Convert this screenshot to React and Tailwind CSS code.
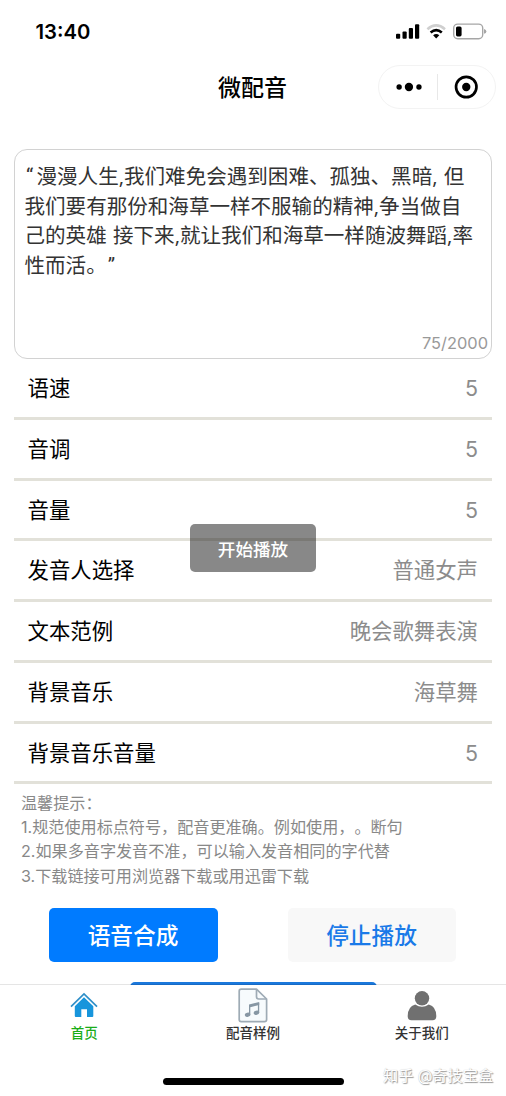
import React from "react";

const rows = [
  ["语速", "5"],
  ["音调", "5"],
  ["音量", "5"],
  ["发音人选择", "普通女声"],
  ["文本范例", "晚会歌舞表演"],
  ["背景音乐", "海草舞"],
  ["背景音乐音量", "5"],
];

const lines = [
  "漫漫人生,我们难免会遇到困难、孤独、黑暗, 但",
  "我们要有那份和海草一样不服输的精神,争当做自",
  "己的英雄 接下来,就让我们和海草一样随波舞蹈,率",
  "性而活。",
];

const tips = [
  "温馨提示：",
  "1.规范使用标点符号，配音更准确。例如使用，。断句",
  "2.如果多音字发音不准，可以输入发音相同的字代替",
  "3.下载链接可用浏览器下载或用迅雷下载",
];

function StatusBar() {
  return (
    <div className="flex h-[63px] shrink-0 items-center justify-between pl-[35.5px] pr-[19px]">
      <span className="text-[20.3px] font-semibold leading-6 text-black">13:40</span>
      <svg className="mb-[2px]" width="92" height="20" viewBox="0 0 92 20">
        <g fill="#000">
          <rect x="1" y="12.7" width="4.2" height="5" rx="1" />
          <rect x="7.5" y="10.5" width="4.2" height="7.2" rx="1" />
          <rect x="13.8" y="7" width="4.2" height="10.7" rx="1" />
          <rect x="20" y="3.2" width="4.2" height="14.5" rx="1" />
        </g>
        <g fill="none" strokeWidth="2.6">
          <path d="M32.4 8.2Q41.2 0.6 50 8.2" stroke="#cfcfcf" />
          <path d="M35.6 11.6Q41.2 6.8 46.8 11.6" stroke="#000" />
        </g>
        <path d="M38.1 14.2Q41.2 11.8 44.3 14.2L41.2 17.6Z" fill="#000" />
        <rect x="58.7" y="3.1" width="29" height="14.6" rx="4" fill="#fff" stroke="#a6a6a6" strokeWidth="1.4" />
        <rect x="61" y="5.4" width="5.6" height="10" rx="1.6" fill="#000" />
        <path d="M89 8Q91.4 8.6 91.4 10.4Q91.4 12.2 89 12.8Z" fill="#a6a6a6" />
      </svg>
    </div>
  );
}

function NavBar() {
  return (
    <div className="grid h-[48px] shrink-0 grid-cols-[1fr_auto_1fr] items-center">
      <span />
      <h1 className="mr-px pt-[2px] text-[23px] font-medium leading-8 text-black">微配音</h1>
      <div className="mr-[10px] flex h-[44px] w-[118px] items-center justify-self-end rounded-full border border-[#f3f3f3]">
        <svg className="flex-1" width="58" height="42" viewBox="0 0 58 42">
          <circle cx="20.3" cy="21" r="2.7" />
          <circle cx="30.2" cy="21" r="4.2" />
          <circle cx="40.3" cy="21" r="2.7" />
        </svg>
        <div className="h-[26px] w-px bg-[#e8e8e8]" />
        <svg className="flex-1" width="58" height="42" viewBox="0 0 58 42">
          <circle cx="28.5" cy="21" r="10.3" fill="none" stroke="#000" strokeWidth="2.7" />
          <circle cx="28.5" cy="21" r="4.2" />
        </svg>
      </div>
    </div>
  );
}

function HomeIcon() {
  return (
    <svg width="28" height="26" viewBox="0 0 28 26">
      <path d="M1 14.7L14 2L27 14.7" fill="none" stroke="#2f8fc8" strokeWidth="1.7" />
      <path d="M14 5.2L23.3 14.2V24Q23.3 25 22.3 25H17V17.3H11.3V25H5.8Q4.8 25 4.8 24V14.2Z" fill="#1795dc" />
    </svg>
  );
}

function MusicFileIcon() {
  return (
    <svg className="mt-[2px]" width="30" height="35" viewBox="0 0 30 35">
      <path
        d="M3.2 1.2H18.5L28.6 11V31.5Q28.6 33.6 26.5 33.6H3.2Q1.2 33.6 1.2 31.5V3.2Q1.2 1.2 3.2 1.2Z"
        fill="#f7fbfd"
        stroke="#9eabb5"
        strokeWidth="1.7"
        strokeLinejoin="round"
      />
      <path d="M18.5 1.5V8.8Q18.5 11 20.7 11H28.3" fill="none" stroke="#9eabb5" strokeWidth="1.7" />
      <g fill="#8797a4">
        <ellipse cx="9.6" cy="26.8" rx="2.8" ry="2.1" transform="rotate(-15 9.6 26.8)" />
        <ellipse cx="18.4" cy="24.8" rx="2.8" ry="2.1" transform="rotate(-15 18.4 24.8)" />
        <path d="M11 16.4L21.2 14V17L12.3 19.2V26.8H11Z" />
        <path d="M19.9 15H21.2V25H19.9Z" />
      </g>
    </svg>
  );
}

function PersonIcon() {
  return (
    <svg className="mt-[2px]" width="30" height="31" viewBox="0 0 30 31" fill="#707070">
      <circle cx="15" cy="8.3" r="7.2" />
      <path d="M8.2 14.4Q15 19.2 21.8 14.4Q29.3 16.5 29.3 26Q29.3 30.3 25.5 30.3H4.5Q0.7 30.3 0.7 26Q0.7 16.5 8.2 14.4Z" />
    </svg>
  );
}

function Tab({ icon, label, color }) {
  return (
    <div className="flex flex-1 flex-col items-center">
      <div className="flex h-[39px] items-center justify-center">{icon}</div>
      <span className={"text-[13.5px] font-medium leading-[18px] " + color}>{label}</span>
    </div>
  );
}

export default function App() {
  return (
    <div className="relative flex h-[1096px] w-[506px] flex-col overflow-hidden bg-white font-['Inter','Noto_Sans_CJK_SC',sans-serif] [text-spacing-trim:space-all]">
      <StatusBar />
      <NavBar />

      <main className="mt-[38px] flex h-[836px] shrink-0 flex-col overflow-hidden px-[14px]">
        <div className="flex h-[210px] shrink-0 flex-col justify-between rounded-[13px] border-[1.5px] border-[#d2d2d2] pl-[9.5px] pr-[3px] pt-[12px]">
          <div className="whitespace-pre font-['Open_Sans','Noto_Sans_CJK_SC',sans-serif] text-[20.55px] leading-[29.7px] text-[#333] [word-spacing:1px]">
            {lines.map((l, i) => (
              <div key={l} className="flex h-[29.7px]">
                {i === 0 && <span className="w-[12px] pl-[1.5px] font-['Roboto']">“</span>}
                <span>{l}</span>
                {i === 3 && <span className="pl-[1px] font-['Roboto']">”</span>}
              </div>
            ))}
          </div>
          <div className="pb-[3px] text-right text-[16.4px] leading-6 text-[#999]">75/2000</div>
        </div>

        <div className="shrink-0">
          {rows.map(([label, value]) => (
            <div
              key={label}
              className="flex h-[60.75px] items-center justify-between border-b-[3px] border-[#e2e1d9] pl-[13.5px] pr-[14px] pt-[0.5px] text-[21.4px] leading-8"
            >
              <span className="text-black">{label}</span>
              <span className="text-[#8c8c8c]">{value}</span>
            </div>
          ))}
        </div>

        <div className="mt-[6.5px] shrink-0 whitespace-nowrap pl-[7px] text-[16.12px] leading-[24.3px] text-[#888]">
          {tips.map((t) => (
            <p key={t}>{t}</p>
          ))}
        </div>

        <div className="mt-[20px] flex shrink-0 justify-between pl-[35px] pr-[36px] text-[22.7px] font-medium">
          <button className="h-[54px] w-[169px] rounded-[5px] bg-[#007bff] pr-px pt-[2px] text-white">语音合成</button>
          <button className="h-[54px] w-[168px] rounded-[5px] bg-[#f8f8f8] pr-px pt-[2px] text-[#1a7ae8]">停止播放</button>
        </div>

        <div className="mt-[20px] h-[54px] w-[247px] shrink-0 self-center rounded-[5px] bg-[#1a78dc]" />
      </main>

      <nav className="-mt-px flex h-[112px] shrink-0 flex-col border-t border-black/10">
        <div className="flex">
          <Tab icon={<HomeIcon />} label="首页" color="text-[#1aad19]" />
          <Tab icon={<MusicFileIcon />} label="配音样例" color="text-[#333]" />
          <Tab icon={<PersonIcon />} label="关于我们" color="text-[#333]" />
        </div>
        <div className="mt-[36px] h-[7px] w-[181px] self-center rounded-full bg-black" />
      </nav>

      <div className="absolute left-[190px] top-[524px] flex h-[48px] w-[126px] items-center justify-center rounded-[5px] bg-[#111]/50 pt-[4px] text-[17.6px] font-medium text-white">
        开始播放
      </div>
      <div className="absolute left-[383px] top-[1064px] whitespace-nowrap text-[15.2px] leading-6 text-white [text-shadow:1px_1px_1px_#999,0_0_1px_#bbb]">
        知乎 @奇技宝盒
      </div>
    </div>
  );
}
